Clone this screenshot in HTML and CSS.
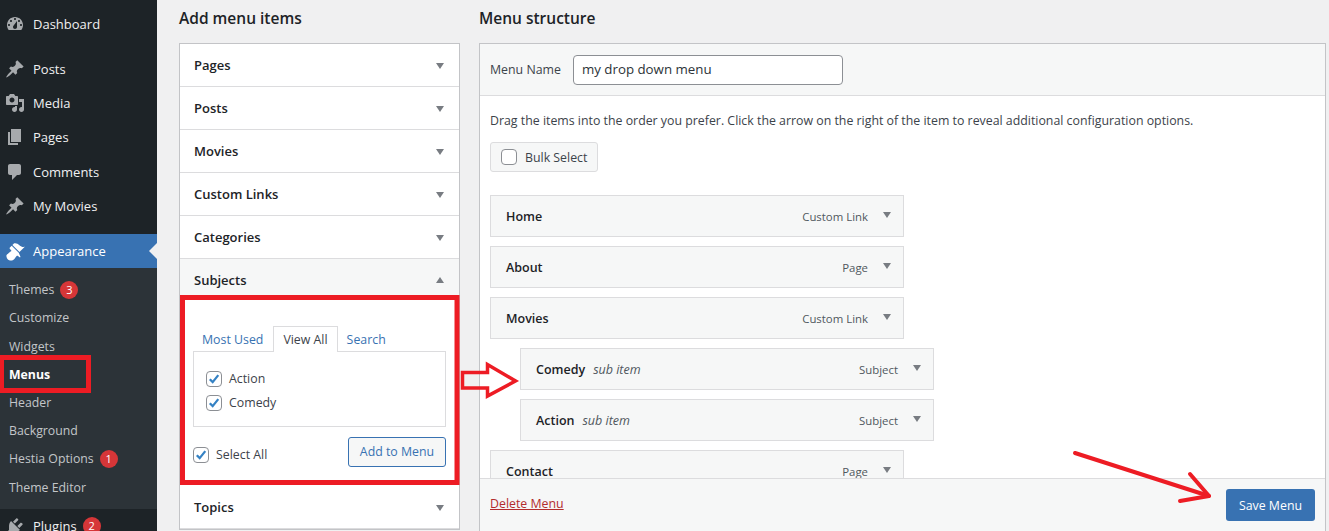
FILE: index.html
```html
<!DOCTYPE html>
<html lang="en">
<head>
<meta charset="utf-8">
<title>Menus</title>
<link rel="stylesheet" href="styles.css">
</head>
<body>
<aside class="sidebar">
  <a class="nav"><svg class="ico" viewBox="0 0 20 20"><path fill-rule="evenodd" d="M3.76 16h12.48c1.1-1.37 1.76-3.11 1.76-5 0-4.42-3.58-8-8-8s-8 3.58-8 8c0 1.89.66 3.63 1.76 5zM10 4c.55 0 1 .45 1 1s-.45 1-1 1-1-.45-1-1 .45-1 1-1zM6 6c.55 0 1 .45 1 1s-.45 1-1 1-1-.45-1-1 .45-1 1-1zm8 0c.55 0 1 .45 1 1s-.45 1-1 1-1-.45-1-1 .45-1 1-1zm-5.37 5.55L12 7v6c0 1.1-.9 2-2 2s-2-.9-2-2c0-.57.24-1.08.63-1.45zM4 10c.55 0 1 .45 1 1s-.45 1-1 1-1-.45-1-1 .45-1 1-1zm12 0c.55 0 1 .45 1 1s-.45 1-1 1-1-.45-1-1 .45-1 1-1z"/></svg>Dashboard</a>
  <div class="nav-sep"></div>
  <a class="nav"><svg class="ico" viewBox="0 0 20 20"><path d="M10.44 3.02l1.82-1.82 6.36 6.35-1.83 1.82c-1.05-.68-2.48-.57-3.41.36l-.75.75c-.92.93-1.04 2.35-.35 3.41l-1.83 1.82-2.41-2.41-2.8 2.79c-.42.42-3.38 2.71-3.8 2.29s1.86-3.39 2.28-3.81l2.79-2.79L4.1 9.36l1.83-1.82c1.05.69 2.48.57 3.4-.36l.75-.75c.93-.92 1.05-2.35.36-3.41z"/></svg>Posts</a>
  <a class="nav"><svg class="ico" viewBox="0 0 20 20"><path fill-rule="evenodd" d="M13 11V4c0-.55-.45-1-1-1h-1.67L9 1H5L3.67 3H2c-.55 0-1 .45-1 1v7c0 .55.45 1 1 1h10c.55 0 1-.45 1-1zM7 4.5c1.38 0 2.5 1.12 2.5 2.5S8.38 9.5 7 9.5 4.5 8.38 4.5 7 5.62 4.5 7 4.5zM14 6h5v10.5c0 1.38-1.12 2.5-2.5 2.5S14 17.88 14 16.5s1.12-2.5 2.5-2.5c.17 0 .34.02.5.05V9h-3V6zm-4 8.05V13h2v3.5c0 1.38-1.12 2.5-2.5 2.5S7 17.88 7 16.5 8.12 14 9.5 14c.17 0 .34.02.5.05z"/></svg>Media</a>
  <a class="nav"><svg class="ico" viewBox="0 0 20 20"><path d="M6 15V2h10v13H6zm-1 1h8v2H3V5h2v11z"/></svg>Pages</a>
  <a class="nav"><svg class="ico" viewBox="0 0 20 20"><path d="M5 2h9c1.1 0 2 .9 2 2v7c0 1.1-.9 2-2 2h-2l-5 5v-5H5c-1.1 0-2-.9-2-2V4c0-1.1.9-2 2-2z"/></svg>Comments</a>
  <a class="nav"><svg class="ico" viewBox="0 0 20 20"><path d="M10.44 3.02l1.82-1.82 6.36 6.35-1.83 1.82c-1.05-.68-2.48-.57-3.41.36l-.75.75c-.92.93-1.04 2.35-.35 3.41l-1.83 1.82-2.41-2.41-2.8 2.79c-.42.42-3.38 2.71-3.8 2.29s1.86-3.39 2.28-3.81l2.79-2.79L4.1 9.36l1.83-1.82c1.05.69 2.48.57 3.4-.36l.75-.75c.93-.92 1.05-2.35.36-3.41z"/></svg>My Movies</a>
  <div class="nav-sep"></div>
  <a class="nav nav-active"><svg class="ico" viewBox="0 0 20 20"><path d="M14.48 11.06L7.41 3.99l1.5-1.5c.5-.56 2.3-.47 3.51.32 1.21.8 1.43 1.28 2.91 2.1 1.18.64 2.45 1.26 4.45.85zm-.71.71L6.7 4.7 4.93 6.47c-.39.39-.39 1.02 0 1.41l1.06 1.06c.39.39.39 1.03 0 1.42-.6.6-1.43 1.11-2.21 1.69-.35.26-.7.53-1.01.84C1.43 13.23.95 15.11 2 17.31c.29.6 1.1 1.41 1.7 1.7 2.2 1.05 4.08.57 5.42-.77.32-.31.58-.66.84-1.01.58-.78 1.09-1.61 1.69-2.21.39-.39 1.03-.39 1.42 0l1.06 1.06c.39.39 1.02.39 1.41 0z"/></svg>Appearance</a>
  <div class="submenu">
    <a class="sub">Themes<span class="badge">3</span></a>
    <a class="sub">Customize</a>
    <a class="sub">Widgets</a>
    <a class="sub sub-current">Menus</a>
    <a class="sub">Header</a>
    <a class="sub">Background</a>
    <a class="sub">Hestia Options<span class="badge">1</span></a>
    <a class="sub">Theme Editor</a>
  </div>
  <a class="nav"><svg class="ico" viewBox="0 0 20 20"><path d="M13.11 4.36L9.87 7.6 8 5.73l3.24-3.24c.35-.34 1.05-.2 1.56.32.52.51.66 1.21.31 1.55zm-8 1.77l.91-1.12 9.01 9.01-1.19.84c-.71.71-2.63 1.16-3.82 1.16H6.14L4.9 17.26c-.59.59-1.54.59-2.12 0-.59-.58-.59-1.53 0-2.12l1.24-1.24v-3.88c0-1.13.4-3.19 1.09-3.89zm7.26 3.97l3.24-3.24c.34-.35 1.04-.21 1.55.31.52.51.66 1.21.31 1.55l-3.24 3.25z"/></svg>Plugins<span class="badge">2</span></a>
</aside>

<main class="main">
  <section class="col-left">
    <h2 class="title">Add menu items</h2>
    <div class="accordion">
      <div class="acc-row"><span>Pages</span><i class="tri-down"></i></div>
      <div class="acc-row"><span>Posts</span><i class="tri-down"></i></div>
      <div class="acc-row"><span>Movies</span><i class="tri-down"></i></div>
      <div class="acc-row"><span>Custom Links</span><i class="tri-down"></i></div>
      <div class="acc-row"><span>Categories</span><i class="tri-down"></i></div>
      <div class="acc-row acc-open"><span>Subjects</span><i class="tri-up"></i></div>
      <div class="acc-body">
        <div class="tabs">
          <span class="tab">Most Used</span>
          <span class="tab tab-on">View All</span>
          <span class="tab">Search</span>
        </div>
        <div class="tab-panel">
          <label class="check"><span class="cb"><svg viewBox="0 0 16 16"><path d="M3.2 8.2l3.3 3.4 6.4-8" /></svg></span>Action</label>
          <label class="check"><span class="cb"><svg viewBox="0 0 16 16"><path d="M3.2 8.2l3.3 3.4 6.4-8" /></svg></span>Comedy</label>
        </div>
        <div class="acc-actions">
          <label class="check select-all"><span class="cb"><svg viewBox="0 0 16 16"><path d="M3.2 8.2l3.3 3.4 6.4-8" /></svg></span>Select All</label>
          <button class="btn-outline">Add to Menu</button>
        </div>
      </div>
      <div class="acc-row acc-last"><span>Topics</span><i class="tri-down"></i></div>
    </div>
  </section>

  <section class="col-right">
    <h2 class="title">Menu structure</h2>
    <div class="panel">
      <div class="panel-head">
        <span class="name-label">Menu Name</span>
        <span class="name-input">my drop down menu</span>
      </div>
      <div class="panel-body">
        <p class="hint">Drag the items into the order you prefer. Click the arrow on the right of the item to reveal additional configuration options.</p>
        <div class="bulk"><span class="cb cb-empty"></span><span class="bulk-text">Bulk Select</span></div>
        <div class="items">
          <div class="item"><b>Home</b><span class="type">Custom Link</span><i class="tri-down"></i></div>
          <div class="item"><b>About</b><span class="type">Page</span><i class="tri-down"></i></div>
          <div class="item"><b>Movies</b><span class="type">Custom Link</span><i class="tri-down"></i></div>
          <div class="item item-sub"><b>Comedy</b><em>sub item</em><span class="type">Subject</span><i class="tri-down"></i></div>
          <div class="item item-sub"><b>Action</b><em>sub item</em><span class="type">Subject</span><i class="tri-down"></i></div>
          <div class="item"><b>Contact</b><span class="type">Page</span><i class="tri-down"></i></div>
        </div>
      </div>
      <div class="panel-foot">
        <a class="delete">Delete Menu</a>
        <button class="btn-primary">Save Menu</button>
      </div>
    </div>
  </section>
</main>

<svg class="annotations" viewBox="0 0 1329 531" width="1329" height="531" aria-hidden="true">
  <g fill="none" stroke="#ed1c24" stroke-width="5">
    <rect x="1.5" y="357.5" width="87" height="33"/>
    <rect x="182.5" y="297.5" width="274.5" height="185"/>
  </g>
  <path d="M462.5 372.5h25v-8l28 16.500-28 15v-8h-25z" fill="none" stroke="#ed1c24" stroke-width="3.500"/>
  <g fill="none" stroke="#ed1c24" stroke-width="4" stroke-linecap="round" stroke-linejoin="round">
    <path d="M1075 453L1209 496"/>
    <path d="M1190 474L1209 496L1180 501"/>
  </g>
</svg>
</body>
</html>
```
FILE: styles.css
```css
* { box-sizing: border-box; }
html, body { margin: 0; height: 531px; overflow: hidden; }
body {
  display: flex;
  background: #f0f0f1;
  color: #3c434a;
  font: 12.35px/1.4 "Open Sans", "Liberation Sans", sans-serif;
}

/* Sidebar */
.sidebar {
  flex: 0 0 157px;
  height: 531px;
  overflow: hidden;
  background: #1d2327;
  padding-top: 7px;
}
.nav {
  position: relative;
  display: flex;
  align-items: center;
  height: 34.35px;
  color: #f0f0f1;
  font-size: 13px;
}
.ico {
  flex: none;
  width: 20px;
  height: 20px;
  margin: 0 8px 0 5px;
  fill: #a7aaad;
}
.nav-sep { height: 10.25px; }
.nav-active { background: #3872b2; color: #fff; }
.nav-active .ico { fill: #fff; }
.nav-active::after {
  content: "";
  position: absolute;
  right: 0;
  top: 9px;
  border: 8px solid transparent;
  border-right-color: #f0f0f1;
  border-left-width: 0;
}
.submenu { background: #2c3338; padding: 7.9px 0 7.4px; }
.sub {
  display: flex;
  align-items: center;
  height: 28.2px;
  padding-left: 9px;
  color: #c3c6c9;
  font-size: 12.3px;
}
.sub-current { color: #fff; font-weight: 700; }
.badge {
  width: 18px;
  height: 18px;
  margin-left: 6px;
  border-radius: 50%;
  background: #d63638;
  color: #fff;
  font-size: 11px;
  line-height: 18px;
  text-align: center;
}

/* Main */
.main { flex: 1; display: flex; gap: 19px; padding-left: 22px; min-width: 0; }
.title {
  margin: 0;
  height: 43px;
  padding-top: 6px;
  color: #1d2327;
  font-size: 15.5px;
  font-weight: 600;
  line-height: 24px;
}
.col-left { flex: 0 0 281px; }
.col-right { flex: 0 0 847px; }

/* Triangles */
.tri-down, .tri-up {
  width: 0;
  height: 0;
  border-left: 4.5px solid transparent;
  border-right: 4.5px solid transparent;
}
.tri-down { border-top: 6px solid #787c82; }
.tri-up { border-bottom: 6px solid #787c82; }

/* Accordion */
.accordion { border: 1px solid #c3c4c7; background: #fff; }
.acc-row {
  display: flex;
  align-items: center;
  justify-content: space-between;
  height: 43px;
  padding: 1px 15px 0 14px;
  border-bottom: 1px solid #dcdcde;
  color: #1d2327;
  font-size: 13px;
  font-weight: 600;
}
.acc-open { background: #f6f7f7; height: 37px; align-items: flex-start; padding-top: 12px; }
.acc-open .tri-up { margin-top: 6px; }
.acc-body { height: 190px; padding: 30px 13px 0; }
.tabs { display: flex; height: 25px; }
.tab {
  padding: 5px 9px 0;
  color: #3872b2;
  white-space: nowrap;
}
.tab-on {
  position: relative;
  margin-bottom: -1px;
  margin-left: 1px;
  padding: 4px 9px 0;
  border: 1px solid #dcdcde;
  border-bottom: 0;
  background: #fff;
  color: #3c434a;
}
.tab-panel {
  height: 76px;
  padding: 15px 12px 0;
  border: 1px solid #dcdcde;
}
.check { display: flex; align-items: center; height: 24px; gap: 7px; }
.cb {
  flex: none;
  display: block;
  width: 16px;
  height: 16px;
  border: 1px solid #8c8f94;
  border-radius: 4px;
  background: #fff;
}
.cb svg { display: block; width: 14px; height: 14px; fill: none; stroke: #3582c4; stroke-width: 2.6; }
.acc-actions { display: flex; justify-content: space-between; margin-top: 10px; height: 30px; }
.select-all { height: 35px; }
.btn-outline {
  width: 98px;
  height: 30px;
  padding: 0;
  border: 1px solid #3872b2;
  border-radius: 3px;
  background: #f6f7f7;
  color: #3872b2;
  font: inherit;
}

/* Right panel */
.panel {
  display: flex;
  flex-direction: column;
  height: 488px;
  border: 1px solid #c3c4c7;
  border-bottom: 0;
  background: #fff;
}
.panel-head {
  flex: none;
  display: flex;
  align-items: center;
  gap: 12px;
  height: 52px;
  padding-left: 10px;
  border-bottom: 1px solid #dcdcde;
  background: #f6f7f7;
}
.name-input {
  display: flex;
  align-items: center;
  width: 270px;
  height: 30px;
  padding-left: 8px;
  border: 1px solid #8c8f94;
  border-radius: 4px;
  background: #fff;
  color: #2c3338;
  font-size: 13.3px;
}
.panel-body { flex: 1; min-height: 0; overflow: hidden; padding: 16px 10px 0; }
.hint { margin: 0; height: 30px; line-height: 18px; white-space: nowrap; }
.bulk {
  display: flex;
  align-items: center;
  gap: 8px;
  width: 108px;
  height: 30px;
  padding-left: 10px;
  border: 1px solid #dcdcde;
  border-radius: 3px;
  background: #f6f7f7;
}
.bulk-text { padding-top: 2px; }
.items { margin-top: 23px; display: flex; flex-direction: column; gap: 9px; }
.item {
  display: flex;
  align-items: center;
  width: 414px;
  height: 42px;
  padding: 2px 12px 0 15px;
  border: 1px solid #dcdcde;
  background: #f6f7f7;
  font-size: 12.5px;
}
.item b { color: #1d2327; font-weight: 600; }
.item em { margin-left: 8px; color: #50575e; }
.item .type { margin-left: auto; margin-right: 15px; color: #50575e; font-size: 11.4px; }
.item .tri-down { margin-bottom: 5px; }
.item-sub { margin-left: 30px; }
.panel-foot {
  flex: none;
  display: flex;
  align-items: center;
  justify-content: space-between;
  height: 53px;
  padding: 0 10px;
  border-top: 1px solid #dcdcde;
  background: #f6f7f7;
}
.delete { padding-bottom: 2px; color: #b32d2e; text-decoration: underline; }
.btn-primary {
  width: 89px;
  height: 32px;
  padding: 1px 0 0;
  border: 0;
  border-radius: 3px;
  background: #3872b2;
  color: #fff;
  font: inherit;
  font-weight: 500;
}

/* Annotations drawn over the screenshot */
.annotations { position: absolute; left: 0; top: 0; pointer-events: none; }
```
